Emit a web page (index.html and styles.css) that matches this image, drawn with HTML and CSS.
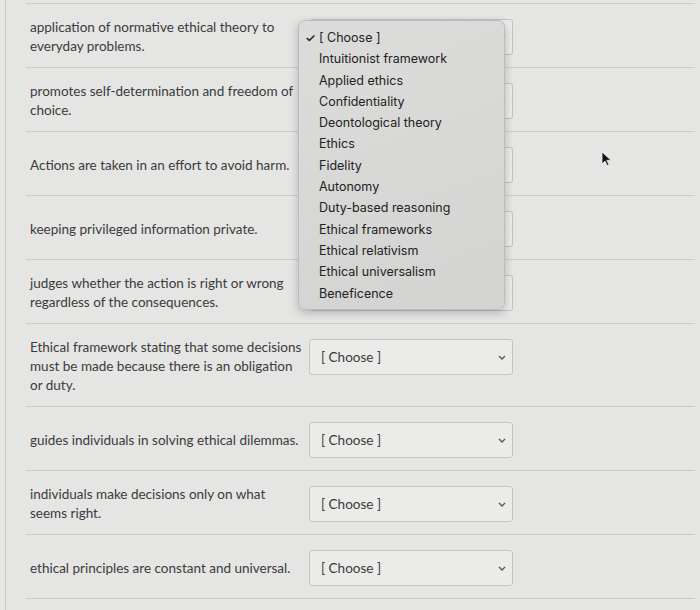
FILE: index.html
```html
<!DOCTYPE html>
<html lang="en">
<head>
    <meta charset="UTF-8">
    <meta name="viewport" content="width=device-width, initial-scale=1.0">
    <title>Matching question</title>
    <link rel="stylesheet" href="styles.css">
</head>
<body>
    <div class="quiz">
        <div class="match-list">
            <div class="match-row">
                <div class="match-label">application of normative ethical theory to everyday problems.</div>
                <div class="match-select"><span>[ Choose ]</span><svg class="chevron" width="8" height="5" viewBox="0 0 8 5"><path d="M1 1l3 3 3-3" fill="none" stroke="#555" stroke-width="1.3"/></svg></div>
            </div>
            <div class="match-row">
                <div class="match-label">promotes self-determination and freedom of choice.</div>
                <div class="match-select"><span>[ Choose ]</span><svg class="chevron" width="8" height="5" viewBox="0 0 8 5"><path d="M1 1l3 3 3-3" fill="none" stroke="#555" stroke-width="1.3"/></svg></div>
            </div>
            <div class="match-row">
                <div class="match-label">Actions are taken in an effort to avoid harm.</div>
                <div class="match-select"><span>[ Choose ]</span><svg class="chevron" width="8" height="5" viewBox="0 0 8 5"><path d="M1 1l3 3 3-3" fill="none" stroke="#555" stroke-width="1.3"/></svg></div>
            </div>
            <div class="match-row">
                <div class="match-label">keeping privileged information private.</div>
                <div class="match-select"><span>[ Choose ]</span><svg class="chevron" width="8" height="5" viewBox="0 0 8 5"><path d="M1 1l3 3 3-3" fill="none" stroke="#555" stroke-width="1.3"/></svg></div>
            </div>
            <div class="match-row">
                <div class="match-label">judges whether the action is right or wrong regardless of the consequences.</div>
                <div class="match-select"><span>[ Choose ]</span><svg class="chevron" width="8" height="5" viewBox="0 0 8 5"><path d="M1 1l3 3 3-3" fill="none" stroke="#555" stroke-width="1.3"/></svg></div>
            </div>
            <div class="match-row">
                <div class="match-label">Ethical framework stating that some decisions must be made because there is an obligation or duty.</div>
                <div class="match-select"><span>[ Choose ]</span><svg class="chevron" width="8" height="5" viewBox="0 0 8 5"><path d="M1 1l3 3 3-3" fill="none" stroke="#555" stroke-width="1.3"/></svg></div>
            </div>
            <div class="match-row">
                <div class="match-label">guides individuals in solving ethical dilemmas.</div>
                <div class="match-select"><span>[ Choose ]</span><svg class="chevron" width="8" height="5" viewBox="0 0 8 5"><path d="M1 1l3 3 3-3" fill="none" stroke="#555" stroke-width="1.3"/></svg></div>
            </div>
            <div class="match-row">
                <div class="match-label">individuals make decisions only on what seems right.</div>
                <div class="match-select"><span>[ Choose ]</span><svg class="chevron" width="8" height="5" viewBox="0 0 8 5"><path d="M1 1l3 3 3-3" fill="none" stroke="#555" stroke-width="1.3"/></svg></div>
            </div>
            <div class="match-row">
                <div class="match-label">ethical principles are constant and universal.</div>
                <div class="match-select"><span>[ Choose ]</span><svg class="chevron" width="8" height="5" viewBox="0 0 8 5"><path d="M1 1l3 3 3-3" fill="none" stroke="#555" stroke-width="1.3"/></svg></div>
            </div>
        </div>

        <!-- open popup of the first select -->
        <ul class="popup-menu">
            <li class="checked">[ Choose ]</li>
            <li>Intuitionist framework</li>
            <li>Applied ethics</li>
            <li>Confidentiality</li>
            <li>Deontological theory</li>
            <li>Ethics</li>
            <li>Fidelity</li>
            <li>Autonomy</li>
            <li>Duty-based reasoning</li>
            <li>Ethical frameworks</li>
            <li>Ethical relativism</li>
            <li>Ethical universalism</li>
            <li>Beneficence</li>
        </ul>

        <svg class="cursor" width="11" height="16" viewBox="0 0 11 16">
            <path d="M1 1v12l3-3 2.2 4.6 1.8-.8-2.2-4.5h4.2z" fill="#111" stroke="#eee" stroke-width="0.8"/>
        </svg>
    </div>
</body>
</html>
```

FILE: styles.css
```css
* {
    margin: 0;
    padding: 0;
    box-sizing: border-box;
}

html, body {
    width: 100%;
    height: 100%;
    overflow: hidden;
}

body {
    background-color: #e5e5e4;
    font-family: 'Lato', 'Open Sans', sans-serif;
    color: #3b3b3b;
}

.quiz {
    position: relative;
    height: 100%;
    margin-left: 5px;
    padding: 3px 5px 0 20px;
    border-left: 1px solid #c6c6c6;
}

.match-list {
    border-top: 1px solid #cbcbcb;
}

.match-row {
    display: flex;
    align-items: flex-start;
    padding: 14px 0 11px 4px;
    border-bottom: 1px solid #cbcbcb;
}

.match-label {
    width: 275px;
    min-height: 38px;
    display: flex;
    align-items: center;
    font-size: 13.5px;
    line-height: 19px;
}

.match-select {
    margin: 1px 0 0 4px;
    width: 204px;
    height: 36px;
    display: flex;
    align-items: center;
    justify-content: space-between;
    padding: 0 6px 0 11px;
    background-color: #ebebea;
    border: 1px solid #c4c4c4;
    border-radius: 3px;
    font-size: 13.5px;
    color: #3b3b3b;
}

.chevron {
    display: block;
}

.popup-menu {
    position: absolute;
    top: 20px;
    left: 292px;
    width: 207px;
    padding: 6px 0 5px;
    list-style: none;
    background: linear-gradient(160deg, #dcdcdb, #d3d3d2);
    border: 1px solid #bcbcbc;
    border-radius: 7px;
    box-shadow: 0 3px 10px rgba(0, 0, 0, 0.22);
    font-family: 'Inter', 'Liberation Sans', sans-serif;
    font-size: 12.5px;
    line-height: 21.3px;
    color: #222;
}

.popup-menu li {
    position: relative;
    padding-left: 20px;
}

.popup-menu li.checked::before {
    content: '\2713';
    position: absolute;
    left: 6px;
    font-size: 12px;
    font-weight: 600;
}

.cursor {
    position: absolute;
    top: 151px;
    left: 595px;
}
```
